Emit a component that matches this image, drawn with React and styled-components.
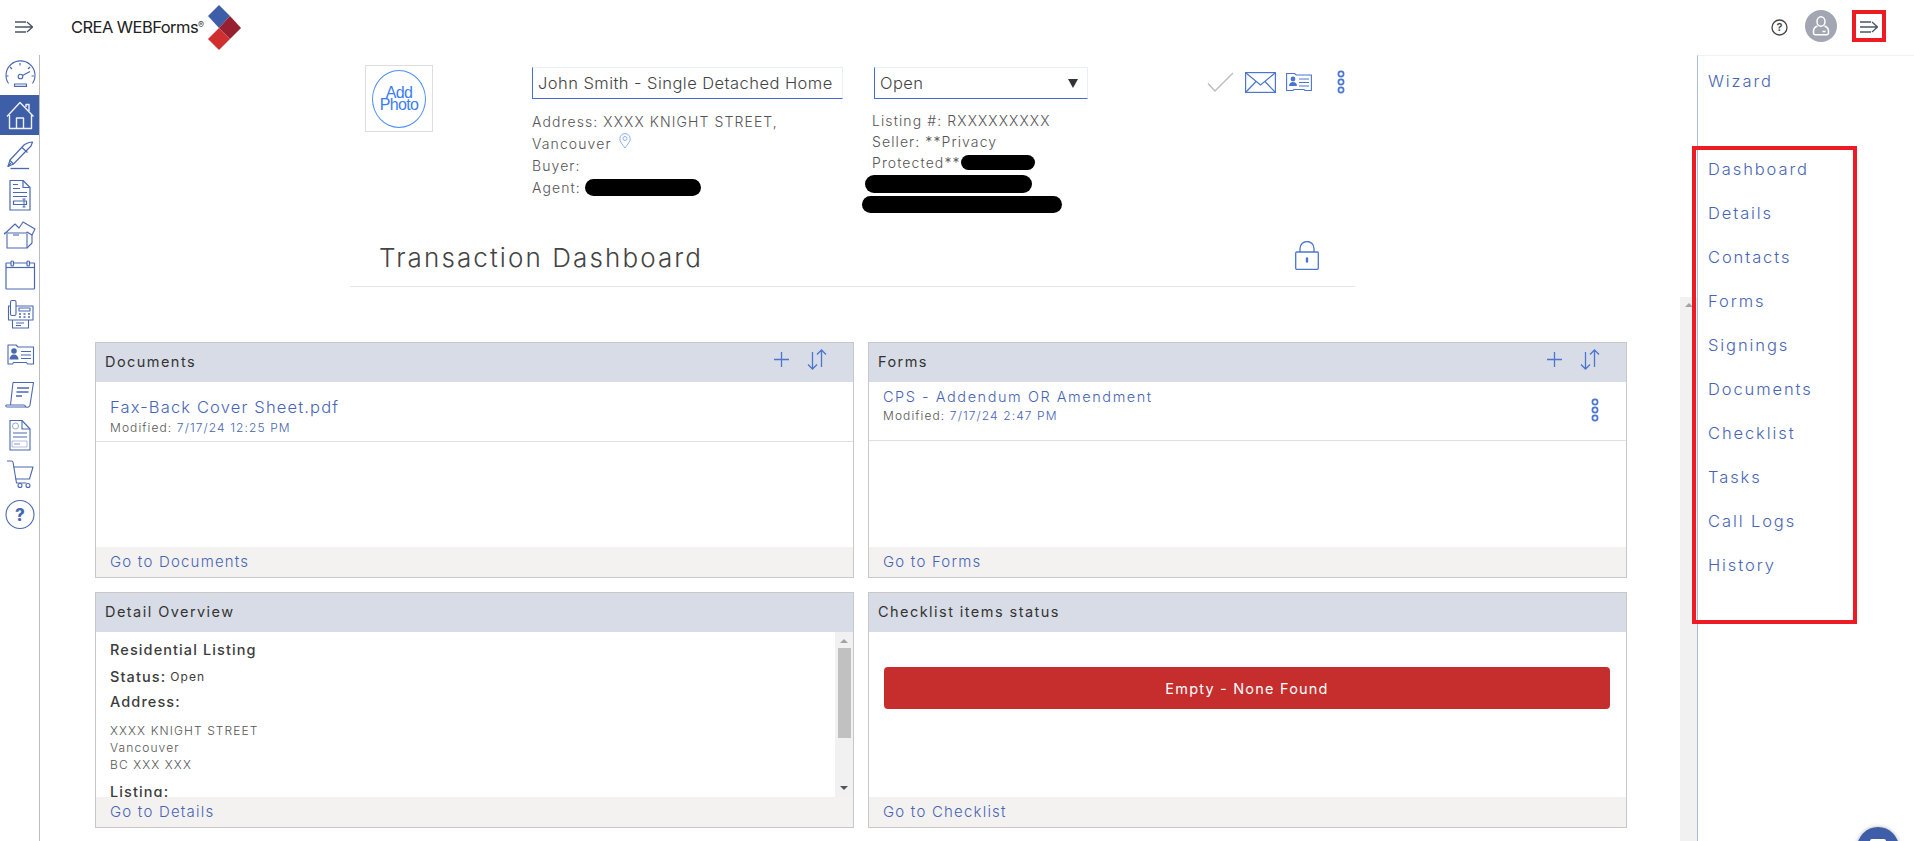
import React from "react";
import styled, { createGlobalStyle } from "styled-components";

const Global = createGlobalStyle`
  html, body { margin: 0; padding: 0; height: 100%; background: #fff; overflow: hidden; }
  body { font-family: Inter, "Open Sans", "Liberation Sans", sans-serif; color: #555; }
  #root { height: 100%; }
  * { box-sizing: border-box; }
`;

const BLUE = "#4a68b2";
const LINK = "#4865b3";

const Page = styled.div`
  position: relative;
  display: flex;
  flex-direction: column;
  height: 100vh;
  overflow: hidden;
`;
const TopBar = styled.header`
  height: 55px;
  display: flex;
  align-items: center;
  flex: none;
`;
const MenuToggle = styled.button`
  width: 18px;
  height: 14px;
  padding: 0;
  margin: -2px 0 0 ${(p) => p.$ml}px;
  border: 0;
  background: none;
  display: block;
  svg { display: block; }
`;
const Logo = styled.div`
  display: flex;
  align-items: center;
  margin-left: 38px;
  height: 55px;
`;
const LogoText = styled.span`
  font-size: 16.5px;
  letter-spacing: -0.55px;
  color: #222;
  width: 137px;
  margin-top: -2px;
  sup { font-size: 9px; line-height: 0; vertical-align: 5px; color: #444; letter-spacing: 0; }
`;
const TopRight = styled.div`
  margin-left: auto;
  display: flex;
  align-items: center;
  padding-right: 36px;
`;
const Avatar = styled.div`
  width: 32px;
  height: 32px;
  border-radius: 50%;
  background: #a2a6b2;
  margin: -4px 0 0 17px;
  display: flex;
  align-items: center;
  justify-content: center;
`;
const Body = styled.div`
  flex: 1;
  display: flex;
  min-height: 0;
`;
const Rail = styled.nav`
  width: 40px;
  flex: none;
  border-right: 1px solid #bcbcbc;
`;
const RailItem = styled.div`
  width: 39px;
  height: 40px;
  background: ${(p) => (p.$active ? "#3f5ea8" : "transparent")};
  svg { display: block; }
`;
const Main = styled.main`
  width: 1657px;
  flex: none;
  display: flex;
  flex-direction: column;
  min-height: 0;
`;
const Header = styled.section`
  height: 242px;
  flex: none;
`;
const Ident = styled.div`
  height: 170px;
  padding: 10px 0 0 325px;
  display: flex;
  align-items: flex-start;
`;
const Photo = styled.div`
  width: 68px;
  height: 67px;
  border: 1px solid #ddd;
  display: flex;
  align-items: center;
  justify-content: center;
  flex: none;
`;
const PhotoCircle = styled.div`
  width: 54px;
  height: 58px;
  border: 1px solid #4d8df5;
  border-radius: 50%;
  display: flex;
  align-items: center;
  justify-content: center;
  text-align: center;
  font-family: "Liberation Sans", Arial, sans-serif;
  font-size: 16px;
  line-height: 12px;
  letter-spacing: -0.7px;
  color: #3b7df0;
`;
const Col = styled.div`
  flex: none;
  width: ${(p) => p.$width}px;
  margin: 2px 0 0 ${(p) => p.$gap}px;
`;
const Field = styled.div`
  height: 32px;
  padding: 0 5px;
  display: flex;
  align-items: center;
  justify-content: space-between;
  font-size: 16.5px;
  font-weight: 300;
  letter-spacing: 0.45px;
  color: #444;
  border: 1px solid #e9edff;
  border-left-color: #3f6fd2;
  border-bottom-color: #3f6fd2;
  white-space: nowrap;
`;
const Caret = styled.span`
  width: 0;
  height: 0;
  margin-right: 4px;
  border-left: 5px solid transparent;
  border-right: 5px solid transparent;
  border-top: 9px solid #333;
`;
const Info = styled.div`
  margin-top: 11px;
  margin-left: ${(p) => p.$shift || 0}px;
  font-size: 14px;
  font-weight: 300;
  letter-spacing: 1.1px;
  color: #555;
`;
const Line = styled.div`
  height: ${(p) => p.$h || 22}px;
  display: flex;
  align-items: center;
  white-space: nowrap;
`;
const Redact = styled.span`
  display: inline-block;
  flex: none;
  width: ${(p) => p.$w}px;
  height: ${(p) => p.$t || 17}px;
  margin-left: ${(p) => p.$m || 0}px;
  background: #000;
  border-radius: 9px;
`;
const PinIcon = styled.svg`
  margin-left: 7px;
  margin-top: -5px;
`;
const Actions = styled.div`
  display: flex;
  align-items: center;
  margin-left: 119px;
  margin-top: 5px;
`;
const ActionIcon = styled.svg`
  display: block;
  margin-right: ${(p) => p.$r || 0}px;
`;
const TitleRow = styled.div`
  width: 1005px;
  height: 62px;
  margin-left: 310px;
  padding: 0 36px 0 29px;
  border-bottom: 1px solid #e5e5e5;
  display: flex;
  align-items: center;
  justify-content: space-between;
`;
const Title = styled.h1`
  margin: 3px 0 0;
  font-size: 26px;
  font-weight: 300;
  letter-spacing: 2.1px;
  color: #444;
`;
const ScrollRow = styled.div`
  flex: 1;
  min-height: 0;
  display: flex;
`;
const Content = styled.div`
  flex: 1;
  overflow: hidden;
  padding: 45px 0 0 55px;
`;
const Track = styled.div`
  width: 17px;
  flex: none;
  background: #f1f1f1;
  padding-top: 6px;
  display: flex;
  justify-content: center;
  align-items: flex-start;
`;
const ArrowUp = styled.span`
  width: 0;
  height: 0;
  border-left: 4px solid transparent;
  border-right: 4px solid transparent;
  border-bottom: 4px solid #a3a3a3;
`;
const ArrowDown = styled.span`
  width: 0;
  height: 0;
  border-left: 4px solid transparent;
  border-right: 4px solid transparent;
  border-top: 4px solid #555;
`;
const Grid = styled.div`
  display: grid;
  grid-template-columns: 759px 759px;
  grid-auto-rows: 236px;
  gap: 14px;
`;
const Panel = styled.article`
  border: 1px solid #c8c8c8;
  display: flex;
  flex-direction: column;
  min-height: 0;
`;
const PanelHead = styled.div`
  height: 39px;
  flex: none;
  background: #d8dce6;
  padding: 0 26px 2px 9px;
  display: flex;
  align-items: center;
  justify-content: space-between;
  font-size: 14.5px;
  font-weight: 400;
  letter-spacing: 1.45px;
  color: #333;
`;
const HeadTools = styled.div`
  display: flex;
  align-items: center;
  gap: 18px;
  margin-top: -4px;
  svg { display: block; }
`;
const PanelBody = styled.div`
  flex: 1;
  min-height: 0;
  overflow: hidden;
  display: flex;
`;
const PanelFoot = styled.div`
  height: 30px;
  flex: none;
  background: #f3f2f1;
  padding: 0 0 2px 14px;
  display: flex;
  align-items: center;
  font-size: 15px;
  font-weight: 300;
  letter-spacing: 1.2px;
  color: ${LINK};
`;
const Item = styled.div`
  width: 100%;
  height: ${(p) => p.$h}px;
  border-bottom: 1px solid #e2dfe0;
  padding: ${(p) => p.$top}px 25px 0 14px;
  display: flex;
  align-items: flex-start;
  justify-content: space-between;
`;
const ItemName = styled.div`
  font-size: ${(p) => p.$size}px;
  line-height: ${(p) => p.$lh}px;
  font-weight: 300;
  letter-spacing: ${(p) => p.$ls}px;
  color: ${LINK};
`;
const Modified = styled.div`
  font-size: 12px;
  line-height: 16px;
  font-weight: 300;
  letter-spacing: 1.1px;
  color: #555;
  margin-top: ${(p) => p.$mt}px;
  span { color: ${LINK}; }
`;
const Dots = styled.svg`
  display: block;
  flex: none;
  margin-top: ${(p) => p.$mt || 0}px;
  margin-right: ${(p) => p.$mr || 0}px;
`;
const DetailText = styled.div`
  flex: 1;
  padding: 0 0 0 14px;
  min-width: 0;
`;
const DetailLine = styled.div`
  height: ${(p) => p.$h}px;
  margin-bottom: ${(p) => p.$mb || 0}px;
  display: flex;
  align-items: center;
  font-size: 14.5px;
  font-weight: 500;
  letter-spacing: 1.1px;
  color: #3c3c3c;
  span { font-size: 12px; margin-left: 4px; font-weight: 400; }
`;
const AddressBlock = styled.div`
  margin-top: 8px;
`;
const Small = styled.div`
  height: 17px;
  display: flex;
  align-items: center;
  font-size: 12px;
  font-weight: 300;
  letter-spacing: 1.1px;
  color: #555;
`;
const MiniScroll = styled.div`
  width: 18px;
  flex: none;
  background: #f1f1f1;
  display: flex;
  flex-direction: column;
  align-items: center;
  padding: 7px 0;
`;
const MiniThumb = styled.div`
  width: 13px;
  height: 90px;
  background: #c1c1c1;
  margin: 5px 0 auto;
`;
const AlertWrap = styled.div`
  width: 100%;
  padding: 35px 16px 0 15px;
`;
const Alert = styled.div`
  height: 42px;
  background: #c62d2d;
  border-radius: 4px;
  color: #fff;
  font-size: 14.5px;
  letter-spacing: 1.2px;
  display: flex;
  align-items: center;
  justify-content: center;
`;
const Side = styled.aside`
  flex: 1;
  border-left: 1px solid #a9bbd6;
  border-top: 1px solid #f2f2f2;
  padding: 3px 0 0 10px;
`;
const NavLink = styled.div`
  height: 44px;
  margin-bottom: ${(p) => (p.$spaced ? 44 : 0)}px;
  display: flex;
  align-items: center;
  font-size: 16.5px;
  font-weight: 300;
  letter-spacing: 1.9px;
  color: ${LINK};
`;
const SideHighlight = styled.div`
  position: absolute;
  left: 1692px;
  top: 146px;
  width: 165px;
  height: 478px;
  border: 4px solid #ed1c24;
  pointer-events: none;
`;
const ToggleHighlight = styled.div`
  position: absolute;
  left: 1852px;
  top: 10px;
  width: 34px;
  height: 32px;
  border: 4px solid #ed1c24;
  pointer-events: none;
`;
const Chat = styled.div`
  position: absolute;
  left: 1857px;
  top: 827px;
  width: 42px;
  height: 42px;
  border-radius: 50%;
  background: #3f5ea8;
  box-shadow: 0 0 4px rgba(0, 0, 0, 0.3);
  display: flex;
  justify-content: center;
  padding-top: 12px;
`;
const ChatGlyph = styled.span`
  width: 16px;
  height: 12px;
  background: #fff;
  border-radius: 2px;
`;

const MenuGlyph = ({ color = "#4a5568" }) => (
  <svg width="18" height="14" viewBox="0 0 18 14" fill="none" stroke={color} strokeWidth="1.3">
    <path d="M0 2h11M0 7h17M0 12h11M12 2 17.5 7 12 12" />
  </svg>
);

const RailSvg = ({ children, stroke = BLUE, sw = 1 }) => (
  <svg width="39" height="40" viewBox="0 0 39 40" fill="none" stroke={stroke} strokeWidth={sw} strokeLinejoin="round">
    {children}
  </svg>
);

const railIcons = [
  <RailSvg key="gauge" sw={1.1}>
    <path d="M8.5 28.5A14.5 14.5 0 1 1 32.5 28.5" />
    <path d="M20 8v2.5M10 12l2 2M30 12l-2 2M6 21h2.5M34 21h-2.5" />
    <circle cx="20.5" cy="21.5" r="2.3" />
    <path d="M22.5 20.5 30 16.5" />
    <rect x="14.5" y="29" width="12" height="2.4" />
  </RailSvg>,
  <RailSvg key="home" stroke="#eef1f8" sw={1.4}>
    <path d="M7 21.5 20 7.5l13.5 14" />
    <path d="M9.5 20v13.5h22V20" />
    <path d="M16.5 33.5V23h7v10.500" />
    <path d="M26 12V9.5h3V16" />
  </RailSvg>,
  <RailSvg key="pen" sw={1.2}>
    <path d="M8 31.5 10 25 24.5 9.5 29 7.5 32.5 7 31 11 28 14 13.5 29Z" />
    <path d="M10 25.5 13.5 29M22 12.5l5.5 5" />
    <path d="M8 31.5 11 28" />
    <path d="M10.5 33.5H29" strokeWidth="1.3" />
  </RailSvg>,
  <RailSvg key="doc" sw={1.2}>
    <path d="M10 5.5h13l7 7v22.5H10Z" />
    <path d="M23 5.5v7h7" />
    <path d="M13 9.5h5M13 13.5h7M13 17.5h14M13 21.5h14" strokeWidth="1" />
    <rect x="13.5" y="26" width="13" height="3.5" />
    <path d="M24 24v8M22.5 24h3M22.5 32h3" strokeWidth="1" />
  </RailSvg>,
  <RailSvg key="box" sw={1.1}>
    <path d="M7 19v14h20V19" />
    <path d="M27 33 32 28V20" />
    <path d="M4.5 19 15 9l4 4 4-6 12 7-3 6-5-3 0 1H4.5Z" />
    <path d="M13 20h6" />
  </RailSvg>,
  <RailSvg key="calendar" sw={1.2}>
    <rect x="6" y="8" width="28.5" height="26" rx="0.5" />
    <path d="M6 12.5h28.5" />
    <rect x="11" y="6" width="2.5" height="5" rx="1" fill="#fff" />
    <rect x="27" y="6" width="2.5" height="5" rx="1" fill="#fff" />
  </RailSvg>,
  <RailSvg key="fax" sw={1.1}>
    <rect x="10.5" y="5.5" width="5.5" height="15" rx="1.5" />
    <path d="M16 11h17v14H8.5V11h2" />
    <rect x="19" y="13" width="11" height="3" />
    <path d="M19 19h2M23.5 19h2M28 19h2M19 22h2M23.5 22h2M28 22h2" strokeWidth="1.4" />
    <path d="M12.5 25v8h16v-8" />
    <path d="M16 28h8M16 30.5h5" />
  </RailSvg>,
  <RailSvg key="id" sw={1.1}>
    <path d="M8 10h8l2 2h15.5v17h-6l-1-1.5h-13l-1 1.5H8Z" />
    <circle cx="14" cy="16" r="2.8" fill={BLUE} stroke="none" />
    <path d="M9.5 24.5c0-3 2-5 4.5-5s4.5 2 4.5 5Z" fill={BLUE} stroke="none" />
    <path d="M21 16.5h10M21 20h10M21 23.5h10" />
  </RailSvg>,
  <RailSvg key="scroll" sw={1.1}>
    <path d="M13 7.5h20.5L30 30c-.4 2.2-2.5 2.5-4 2H7c-1.5 0-1.5-2-.5-2H24c1 0 1.5 1.5 2 2" />
    <path d="M13 7.5 10.5 30" />
    <path d="M17 13h12M16.5 17h12M16 21h6" strokeWidth="1.3" />
  </RailSvg>,
  <RailSvg key="form" sw={1.1}>
    <path d="M10 5.5h12l8 8.5v21H10Z" />
    <path d="M22 5.5V14h8" />
    <circle cx="15.5" cy="11" r="3" strokeWidth="0.8" opacity="0.7" />
    <path d="M13 18h14M13 22h14" strokeWidth="1.2" />
    <rect x="12" y="26" width="15" height="6" strokeWidth="0.6" opacity="0.7" />
    <path d="M14 29h6" strokeWidth="0.7" />
  </RailSvg>,
  <RailSvg key="cart" sw={1.1}>
    <path d="M7 6h4.5c.8 0 1.4.6 1.6 1.5L16.5 28h10" />
    <path d="M13.5 12H33l-3.5 12H15.5" />
    <circle cx="20" cy="30.5" r="2" />
    <circle cx="28" cy="30.5" r="2" />
  </RailSvg>,
  <RailSvg key="help" sw={1.1}>
    <circle cx="20" cy="19.5" r="14" />
    <text x="20" y="25.5" textAnchor="middle" fontSize="17" fontWeight="800" fontFamily="Inter, sans-serif" fill={BLUE} stroke="none">?</text>
  </RailSvg>,
];

const PlusIcon = () => (
  <svg width="15" height="15" viewBox="0 0 15 15" stroke="#4a75d0" strokeWidth="1.3">
    <path d="M7.5 0v15M0 7.5h15" />
  </svg>
);
const SortIcon = () => (
  <svg width="20" height="21" viewBox="0 0 20 21" fill="none" stroke="#4a75d0" strokeWidth="1.3">
    <path d="M5.5 3v17M1 15.5 5.5 20 10 15.5M14.5 18V1M10 5.5 14.5 1 19 5.5" />
  </svg>
);
const DotsIcon = ({ mt, mr }) => (
  <Dots $mt={mt} $mr={mr} width="8" height="24" viewBox="0 0 8 24" fill="none" stroke="#4a75d0" strokeWidth="1.7">
    <circle cx="4" cy="4" r="2.6" />
    <circle cx="4" cy="12" r="2.6" />
    <circle cx="4" cy="20" r="2.6" />
  </Dots>
);

const navItems = ["Dashboard", "Details", "Contacts", "Forms", "Signings", "Documents", "Checklist", "Tasks", "Call Logs", "History"];

export default function App() {
  return (
    <Page>
      <Global />
      <TopBar>
        <MenuToggle $ml={15}><MenuGlyph /></MenuToggle>
        <Logo>
          <LogoText>CREA WEBForms<sup>®</sup></LogoText>
          <svg width="36" height="46" viewBox="0 0 36 46">
            <path d="M0 11 11 0l11 11-11 12Z" fill="#3f5ea8" />
            <path d="M22 11 33 23 22 34 11 23Z" fill="#96202f" />
            <path d="M11 23 22 34 11 45 0 34Z" fill="#cf2f2f" />
          </svg>
        </Logo>
        <TopRight>
          <svg width="17" height="17" viewBox="0 0 17 17" fill="none" stroke="#444" strokeWidth="1.3">
            <circle cx="8.5" cy="8.5" r="7.5" />
            <text x="8.5" y="12.3" textAnchor="middle" fontSize="11" fontWeight="600" fontFamily="Inter, sans-serif" fill="#444" stroke="none">?</text>
          </svg>
          <Avatar>
            <svg width="18" height="20" viewBox="0 0 18 20" fill="none" stroke="#fff" strokeWidth="1.5">
              <ellipse cx="9" cy="5.5" rx="4" ry="4.7" />
              <path d="M5.5 10C3 11 1.5 12.5 1.5 15v2c0 1 .6 1.7 1.6 1.7h11.8c1 0 1.6-.7 1.6-1.7v-2c0-2.5-1.5-4-4-5" />
              <path d="M10.5 15.5h3" />
            </svg>
          </Avatar>
          <MenuToggle $ml={23}><MenuGlyph /></MenuToggle>
        </TopRight>
      </TopBar>
      <Body>
        <Rail>
          {railIcons.map((icon, i) => (
            <RailItem key={i} $active={i === 1}>{icon}</RailItem>
          ))}
        </Rail>
        <Main>
          <Header>
            <Ident>
              <Photo>
                <PhotoCircle>Add<br />Photo</PhotoCircle>
              </Photo>
              <Col $width={311} $gap={99}>
                <Field>John Smith - Single Detached Home</Field>
                <Info>
                  <Line>Address: XXXX KNIGHT STREET,</Line>
                  <Line>
                    Vancouver
                    <PinIcon width="12" height="16" viewBox="0 0 12 16" fill="none" stroke="#8fb0ee" strokeWidth="1">
                      <path d="M6 15C3 11 .8 8.5.8 5.8a5.2 5.2 0 0 1 10.4 0C11.2 8.5 9 11 6 15Z" />
                      <circle cx="6" cy="5.5" r="2" />
                    </PinIcon>
                  </Line>
                  <Line>Buyer:</Line>
                  <Line>Agent:<Redact $w={116} $m={4} /></Line>
                </Info>
              </Col>
              <Col $width={214} $gap={31}>
                <Field>Open<Caret /></Field>
                <Info $shift={-2}>
                  <Line $h={21}>Listing #: RXXXXXXXXX</Line>
                  <Line $h={21}>Seller: **Privacy</Line>
                  <Line $h={21}>Protected**<Redact $w={74} $t={15} /></Line>
                  <Line $h={21}><Redact $w={167} $t={18} $m={-7} /></Line>
                  <Line $h={21}><Redact $w={200} $t={17} $m={-10} /></Line>
                </Info>
              </Col>
              <Actions>
                <ActionIcon $r={11} width="27" height="20" viewBox="0 0 27 20" fill="none" stroke="#bcbcbc" strokeWidth="1.4">
                  <path d="M1 11.5 8 19 26 1" />
                </ActionIcon>
                <ActionIcon $r={10} width="31" height="21" viewBox="0 0 31 21" fill="none" stroke="#4a75d0" strokeWidth="1.2">
                  <rect x="0.6" y="0.6" width="29.8" height="19.8" />
                  <path d="M1 1 15.5 13 30 1M1 20 11 9.5M30 20 20 9.5" />
                </ActionIcon>
                <ActionIcon $r={25} width="26" height="20" viewBox="0 0 26 20" fill="none" stroke="#4a75d0" strokeWidth="1.1">
                  <path d="M.6 1.5h8l1.5 1.5h15.3v15.5H19l-1-1H8l-1 1H.6Z" />
                  <circle cx="7" cy="7" r="2.4" fill="#4a75d0" stroke="none" />
                  <path d="M3 14c0-2.5 1.8-4 4-4s4 1.5 4 4Z" fill="#4a75d0" stroke="none" />
                  <path d="M13 7h10M13 10.5h10M13 14h10" />
                </ActionIcon>
                <DotsIcon />
              </Actions>
            </Ident>
            <TitleRow>
              <Title>Transaction Dashboard</Title>
              <svg width="24" height="29" viewBox="0 0 24 29" fill="none" stroke="#4a75d0" strokeWidth="1.3">
                <rect x="0.7" y="11" width="22.6" height="17.3" rx="1" />
                <path d="M5 11V7.5a7 7 0 0 1 14 0V11" />
                <path d="M12 17.5v3" strokeWidth="2.4" strokeLinecap="round" />
              </svg>
            </TitleRow>
          </Header>
          <ScrollRow>
            <Content>
              <Grid>
                <Panel>
                  <PanelHead>
                    Documents
                    <HeadTools><PlusIcon /><SortIcon /></HeadTools>
                  </PanelHead>
                  <PanelBody>
                    <Item $h={60} $top={15}>
                      <div>
                        <ItemName $size={16.5} $lh={20} $ls={1.15}>Fax-Back Cover Sheet.pdf</ItemName>
                        <Modified $mt={3}>Modified: <span>7/17/24 12:25 PM</span></Modified>
                      </div>
                    </Item>
                  </PanelBody>
                  <PanelFoot>Go to Documents</PanelFoot>
                </Panel>
                <Panel>
                  <PanelHead>
                    Forms
                    <HeadTools><PlusIcon /><SortIcon /></HeadTools>
                  </PanelHead>
                  <PanelBody>
                    <Item $h={59} $top={6}>
                      <div>
                        <ItemName $size={14.5} $lh={18} $ls={1.55}>CPS - Addendum OR Amendment</ItemName>
                        <Modified $mt={2}>Modified: <span>7/17/24 2:47 PM</span></Modified>
                      </div>
                      <DotsIcon mt={10} mr={2} />
                    </Item>
                  </PanelBody>
                  <PanelFoot>Go to Forms</PanelFoot>
                </Panel>
                <Panel>
                  <PanelHead>Detail Overview</PanelHead>
                  <PanelBody>
                    <DetailText>
                      <DetailLine $h={34} $mb={-2}>Residential Listing</DetailLine>
                      <DetailLine $h={25}>Status:<span>Open</span></DetailLine>
                      <DetailLine $h={25}>Address:</DetailLine>
                      <AddressBlock>
                        <Small>XXXX KNIGHT STREET</Small>
                        <Small>Vancouver</Small>
                        <Small>BC XXX XXX</Small>
                      </AddressBlock>
                      <DetailLine $h={36}>Listing:</DetailLine>
                    </DetailText>
                    <MiniScroll>
                      <ArrowUp />
                      <MiniThumb />
                      <ArrowDown />
                    </MiniScroll>
                  </PanelBody>
                  <PanelFoot>Go to Details</PanelFoot>
                </Panel>
                <Panel>
                  <PanelHead>Checklist items status</PanelHead>
                  <PanelBody>
                    <AlertWrap>
                      <Alert>Empty - None Found</Alert>
                    </AlertWrap>
                  </PanelBody>
                  <PanelFoot>Go to Checklist</PanelFoot>
                </Panel>
              </Grid>
            </Content>
            <Track><ArrowUp /></Track>
          </ScrollRow>
        </Main>
        <Side>
          <NavLink $spaced>Wizard</NavLink>
          {navItems.map((n) => (
            <NavLink key={n}>{n}</NavLink>
          ))}
        </Side>
      </Body>
      <SideHighlight />
      <ToggleHighlight />
      <Chat><ChatGlyph /></Chat>
    </Page>
  );
}
